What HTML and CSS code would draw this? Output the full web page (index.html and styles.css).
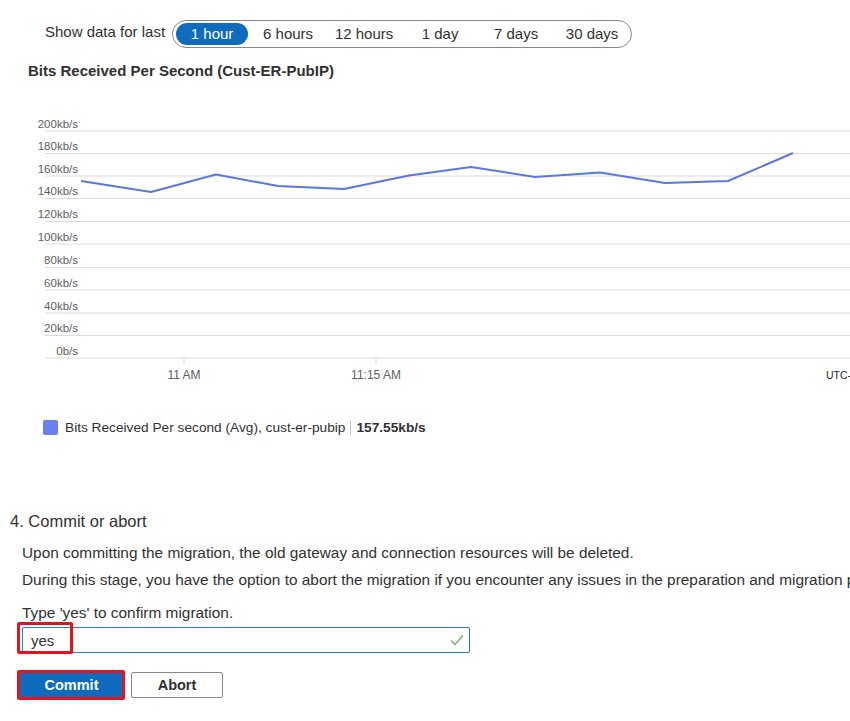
FILE: index.html
```html
<!DOCTYPE html>
<html lang="en">
<head>
  <meta charset="UTF-8" />
  <meta name="viewport" content="width=device-width, initial-scale=1" />
  <title>Commit migration</title>
  <link rel="stylesheet" href="styles.css">
</head>
<body>

  <div class="range">
    <span class="range-label">Show data for last</span>
    <div class="pills">
      <span class="pill active">1 hour</span>
      <span class="pill">6 hours</span>
      <span class="pill">12 hours</span>
      <span class="pill">1 day</span>
      <span class="pill">7 days</span>
      <span class="pill">30 days</span>
    </div>
  </div>

  <h2 class="chart-title">Bits Received Per Second (Cust-ER-PubIP)</h2>

  <svg class="chart" width="850" height="280" viewBox="0 110 850 280">
    <g class="grid">
      <line x1="45" x2="850" y1="131" y2="131" />
      <line x1="45" x2="850" y1="153.5" y2="153.5" />
      <line x1="45" x2="850" y1="176" y2="176" />
      <line x1="45" x2="850" y1="198.5" y2="198.5" />
      <line x1="45" x2="850" y1="221.5" y2="221.5" />
      <line x1="45" x2="850" y1="244" y2="244" />
      <line x1="45" x2="850" y1="267.5" y2="267.5" />
      <line x1="45" x2="850" y1="290" y2="290" />
      <line x1="45" x2="850" y1="313" y2="313" />
      <line x1="45" x2="850" y1="335.5" y2="335.5" />
      <line x1="45" x2="850" y1="358" y2="358" />
      <line x1="184" x2="184" y1="358" y2="364" />
      <line x1="376" x2="376" y1="358" y2="364" />
    </g>
    <g class="ylabels">
      <text x="78" y="127.5">200kb/s</text>
      <text x="78" y="150">180kb/s</text>
      <text x="78" y="172.5">160kb/s</text>
      <text x="78" y="195">140kb/s</text>
      <text x="78" y="218">120kb/s</text>
      <text x="78" y="240.5">100kb/s</text>
      <text x="78" y="264">80kb/s</text>
      <text x="78" y="286.5">60kb/s</text>
      <text x="78" y="309.5">40kb/s</text>
      <text x="78" y="332">20kb/s</text>
      <text x="78" y="354.5">0b/s</text>
    </g>
    <g class="xlabels">
      <text x="184" y="378.5">11 AM</text>
      <text x="376" y="378.5">11:15 AM</text>
      <text class="utc" x="826" y="378.5">UTC-</text>
    </g>
    <polyline class="series" points="81,181 151,192 216,174.5 278,186 344,189 409,175.5 471,167 535,177 600,172.5 665,183 728,181 793,153" />
  </svg>

  <div class="legend">
    <span class="swatch"></span>
    <span class="legend-name">Bits Received Per second (Avg), cust-er-pubip</span>
    <span class="legend-value">157.55kb/s</span>
  </div>

  <div class="step">
    <h3 class="step-title">4. Commit or abort</h3>
    <p>Upon committing the migration, the old gateway and connection resources will be deleted.</p>
    <p>During this stage, you have the option to abort the migration if you encounter any issues in the preparation and migration phases.</p>
    <label class="confirm-label" for="confirm">Type 'yes' to confirm migration.</label>
    <div class="field">
      <input id="confirm" type="text" value="yes" />
      <svg class="check" width="14" height="12" viewBox="0 0 14 12">
        <path d="M1 6.5 L5 10.5 L13 1.5" />
      </svg>
      <span class="mark mark-input"></span>
    </div>
    <div class="actions">
      <span class="commit-wrap">
        <button class="btn primary">Commit</button>
        <span class="mark mark-btn"></span>
      </span>
      <button class="btn">Abort</button>
    </div>
  </div>

</body>
</html>
```

FILE: styles.css
```css
body {
  margin: 0;
  width: 850px;
  height: 721px;
  overflow: hidden;
  font-family: 'Liberation Sans', Arial, sans-serif;
  color: #323130;
  background: #fff;
  white-space: nowrap;
}
.range {
  display: flex;
  align-items: center;
  gap: 7px;
  margin: 20px 0 0 45px;
  height: 28px;
}
.range-label {
  font-size: 15px;
  margin-top: -5px;
}
.pills {
  display: flex;
  align-items: center;
  border: 1px solid #8a8886;
  border-radius: 14px;
  padding: 2px 1px;
  height: 22px;
}
.pill {
  width: 72px;
  margin: 0 2px;
  height: 22px;
  line-height: 22px;
  text-align: center;
  font-size: 15px;
  border-radius: 11px;
}
.pill.active {
  background: #0f6cbd;
  color: #fff;
}
.chart-title {
  margin: 13px 0 0 28px;
  font-size: 15px;
  font-weight: bold;
  height: 19px;
  line-height: 19px;
}
.chart {
  display: block;
  margin-top: 30px;
}
.grid line {
  stroke: #dcdcdc;
  stroke-width: 1.2;
}
.ylabels text {
  font-size: 11.5px;
  fill: #605e5c;
  text-anchor: end;
}
.xlabels text {
  font-size: 12px;
  fill: #605e5c;
  text-anchor: middle;
}
.xlabels .utc {
  font-size: 10.5px;
  fill: #201f1e;
  text-anchor: start;
}
.series {
  fill: none;
  stroke: #5b76e6;
  stroke-width: 2;
  stroke-linejoin: round;
}
.legend {
  display: flex;
  align-items: center;
  margin: 29px 0 0 43px;
  height: 16px;
  font-size: 13.7px;
}
.swatch {
  width: 15px;
  height: 15px;
  border-radius: 2px;
  background: #6a80ee;
  margin-right: 7px;
}
.legend-name {
  padding-right: 5px;
  border-right: 1px solid #c8c6c4;
}
.legend-value {
  font-weight: bold;
  padding-left: 5px;
}
.step {
  margin: 76px 0 0 10px;
}
.step-title {
  font-size: 16.5px;
  font-weight: normal;
  margin: 0 0 11px 0;
  height: 21px;
  line-height: 21px;
}
.step p {
  font-size: 15.4px;
  margin: 0 0 7px 12px;
  height: 20px;
  line-height: 20px;
}
.confirm-label {
  display: block;
  font-size: 15.4px;
  margin: 13px 0 4px 12px;
  height: 20px;
  line-height: 20px;
}
.field {
  position: relative;
  margin-left: 12px;
  width: 448px;
  height: 26px;
}
.field input {
  box-sizing: border-box;
  width: 100%;
  height: 26px;
  border: 1.5px solid #2a7bc8;
  border-radius: 2px;
  padding: 0 8px;
  font-family: inherit;
  font-size: 15px;
  color: #323130;
  outline: none;
}
.check {
  position: absolute;
  right: 6px;
  top: 7px;
}
.check path {
  fill: none;
  stroke: #6bb36b;
  stroke-width: 1.5;
}
.mark {
  position: absolute;
  border: 3px solid #e8121b;
  border-radius: 2px;
  pointer-events: none;
}
.mark-input {
  left: -5px;
  top: -5px;
  width: 50px;
  height: 26px;
}
.actions {
  display: flex;
  gap: 8px;
  margin: 19px 0 0 10px;
}
.commit-wrap {
  position: relative;
  display: inline-block;
}
.btn {
  box-sizing: border-box;
  height: 26px;
  width: 92px;
  font-family: inherit;
  font-size: 14.5px;
  font-weight: bold;
  border: 1px solid #8a8886;
  border-radius: 2px;
  background: #fff;
  color: #323130;
}
.btn.primary {
  width: 103px;
  background: #0f6cbd;
  border-color: #0f6cbd;
  color: #fff;
}
.mark-btn {
  left: -3px;
  top: -2px;
  width: 102px;
  height: 24px;
}
```
